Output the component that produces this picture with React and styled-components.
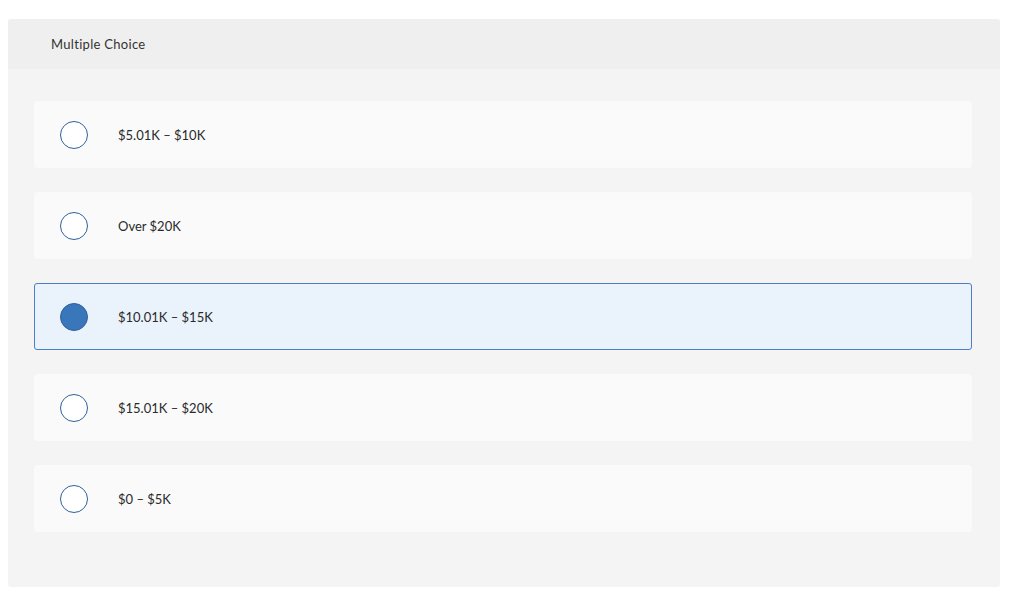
import styled, { createGlobalStyle } from "styled-components";
import { useState } from "react";

const GlobalStyle = createGlobalStyle`
  body {
    margin: 0;
    background: #ffffff;
    font-family: "Lato", "Open Sans", sans-serif;
  }
`;

const options = [
  { id: "a", label: "$5.01K – $10K" },
  { id: "b", label: "Over $20K" },
  { id: "c", label: "$10.01K – $15K" },
  { id: "d", label: "$15.01K – $20K" },
  { id: "e", label: "$0 – $5K" },
];

const App = () => {
  const [selected, setSelected] = useState("c");

  return (
    <Page>
      <GlobalStyle />
      <Panel>
        <Header>Multiple Choice</Header>
        <Body>
          {options.map(({ id, label }) => (
            <Option
              key={id}
              $active={selected === id}
              onClick={() => setSelected(id)}
            >
              <Radio $active={selected === id} />
              <Label>{label}</Label>
            </Option>
          ))}
        </Body>
      </Panel>
    </Page>
  );
};

const Page = styled.div`
  padding: 19px 24px 0 8px;
`;

const Panel = styled.div`
  width: 992px;
  height: 568px;
  background: #f4f4f4;
  border-radius: 3px;
  overflow: hidden;
`;

const Header = styled.div`
  height: 50px;
  background: #efefef;
  display: flex;
  align-items: center;
  padding-left: 43px;
  font-size: 13px;
  letter-spacing: 0.3px;
  color: #333;
`;

const Body = styled.div`
  display: flex;
  flex-direction: column;
  gap: 24px;
  padding: 32px 28px 0 26px;
`;

const Option = styled.div`
  box-sizing: border-box;
  height: 67px;
  display: flex;
  align-items: center;
  padding-left: 25px;
  border-radius: 3px;
  cursor: pointer;
  background: ${({ $active }) => ($active ? "#eaf2fb" : "#fafafa")};
  border: 1px solid ${({ $active }) => ($active ? "#4a7fc4" : "#fafafa")};
`;

const Radio = styled.span`
  box-sizing: border-box;
  width: 28px;
  height: 28px;
  border-radius: 50%;
  border: 1px solid #2f619c;
  background: ${({ $active }) => ($active ? "#3a76ba" : "#ffffff")};
  flex-shrink: 0;
`;

const Label = styled.span`
  margin-left: 30px;
  font-size: 13px;
  color: #2a2a2a;
`;

export default App;
